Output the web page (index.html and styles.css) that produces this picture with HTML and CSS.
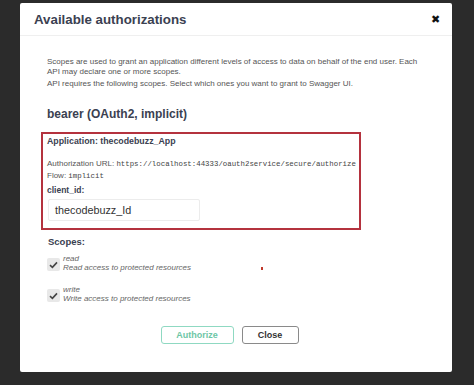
FILE: index.html
```html
<!DOCTYPE html>
<html>
<head>
<meta charset="utf-8">
<link rel="stylesheet" href="styles.css">
</head>
<body>
<div class="modal">
  <div class="modal-header">
    <h3 class="title">Available authorizations</h3>
    <span class="close-x">&#x2716;</span>
  </div>
  <div class="modal-body">
    <p class="desc">Scopes are used to grant an application different levels of access to data on behalf of the end user. Each API may declare one or more scopes.</p>
    <p class="desc">API requires the following scopes. Select which ones you want to grant to Swagger UI.</p>
    <h4 class="scheme">bearer (OAuth2, implicit)</h4>
    <div class="highlight">
      <p class="app">Application: thecodebuzz_App</p>
      <p class="meta">Authorization URL: <code>https://localhost:44333/oauth2service/secure/authorize</code></p>
      <p class="meta">Flow: <code>implicit</code></p>
      <p class="label">client_id:</p>
      <div class="input">thecodebuzz_Id</div>
    </div>
    <p class="scopes-title">Scopes:</p>
    <div class="scope">
      <span class="check"><svg width="9" height="8" viewBox="0 0 9 8"><path d="M1 4.2 L3.4 6.4 L8 1.4" fill="none" stroke="#444" stroke-width="1.6"/></svg></span>
      <div class="scope-text"><span class="name">read</span><span class="sdesc">Read access to protected resources</span></div>
    </div>
    <div class="scope">
      <span class="check"><svg width="9" height="8" viewBox="0 0 9 8"><path d="M1 4.2 L3.4 6.4 L8 1.4" fill="none" stroke="#444" stroke-width="1.6"/></svg></span>
      <div class="scope-text"><span class="name">write</span><span class="sdesc">Write access to protected resources</span></div>
    </div>
    <div class="actions">
      <button class="btn authorize">Authorize</button>
      <button class="btn close">Close</button>
    </div>
    <span class="dot"></span>
  </div>
</div>
</body>
</html>
```
FILE: styles.css
```css
html, body {
  margin: 0;
  padding: 0;
  background: #2b2b2b;
  width: 474px;
  height: 385px;
  overflow: hidden;
}
body {
  padding: 3px 22px 0 20px;
  box-sizing: border-box;
  font-family: "Liberation Sans", Arial, sans-serif;
  color: #3b4151;
}
.modal {
  position: relative;
  background: #fff;
  width: 432px;
  height: 369px;
  border-radius: 2px;
  box-sizing: border-box;
}
.modal-header {
  display: flex;
  align-items: center;
  justify-content: space-between;
  height: 32px;
  padding: 0 12px 0 14px;
  border-bottom: 1px solid #efefef;
}
.title {
  margin: 0;
  font-size: 13.3px;
  font-weight: bold;
  color: #3b4151;
}
.close-x {
  font-size: 11px;
  color: #111;
}
.modal-body {
  padding: 21px 32px 0 27px;
}
.desc {
  margin: 0 0 2px;
  font-size: 8px;
  line-height: 10px;
  color: #555;
}
.scheme {
  margin: 18px 0 0;
  font-size: 12px;
  line-height: 14px;
  font-weight: bold;
  color: #3b4151;
}
.highlight {
  margin: 11px 0 0 -6px;
  width: 320px;
  height: 98px;
  box-sizing: border-box;
  border: 2px solid #b4323e;
  padding: 1px 0 0 4px;
}
.app {
  margin: 0;
  font-size: 8.8px;
  font-weight: bold;
  line-height: 12px;
}
.meta {
  margin: 0;
  font-size: 8px;
  line-height: 12px;
  color: #555;
}
.highlight .app + .meta {
  margin-top: 11px;
}
code {
  font-family: "Liberation Mono", "DejaVu Sans Mono", monospace;
  font-size: 7.4px;
  color: #444;
}
.label {
  margin: 2px 0 0;
  font-size: 8.5px;
  font-weight: bold;
  line-height: 12px;
}
.input {
  margin: 3px 0 0 1px;
  width: 152px;
  height: 22px;
  box-sizing: border-box;
  border: 1px solid #ececec;
  border-radius: 2px;
  padding: 0 6px;
  font-size: 10.8px;
  line-height: 20px;
  color: #333;
}
.scopes-title {
  margin: 6px 0 0 1px;
  font-size: 9.5px;
  font-weight: bold;
  line-height: 12px;
}
.scope {
  display: flex;
  align-items: flex-start;
  gap: 3px;
  margin-top: 6px;
}
.scope + .scope {
  margin-top: 13px;
}
.check {
  width: 13px;
  height: 13px;
  margin-top: 4px;
  background: #e8e8e8;
  border-radius: 2px;
  display: flex;
  align-items: center;
  justify-content: center;
}
.scope-text {
  display: flex;
  flex-direction: column;
  font-style: italic;
  font-size: 8px;
  line-height: 9px;
  color: #666;
}
.actions {
  display: flex;
  justify-content: center;
  gap: 8px;
  margin: 23px 0 0 -8px;
}
.btn {
  height: 18px;
  padding: 0;
  font-family: "Liberation Sans", Arial, sans-serif;
  font-size: 9px;
  font-weight: bold;
  border-radius: 3px;
  background: #fff;
}
.authorize {
  width: 73px;
  border: 1.5px solid #8fd9c2;
  color: #6dc6a6;
}
.close {
  width: 57px;
  border: 1.5px solid #8a8a8a;
  color: #333;
}
.dot {
  position: absolute;
  left: 241px;
  top: 264px;
  width: 2px;
  height: 3px;
  background: #c0392b;
}
```
